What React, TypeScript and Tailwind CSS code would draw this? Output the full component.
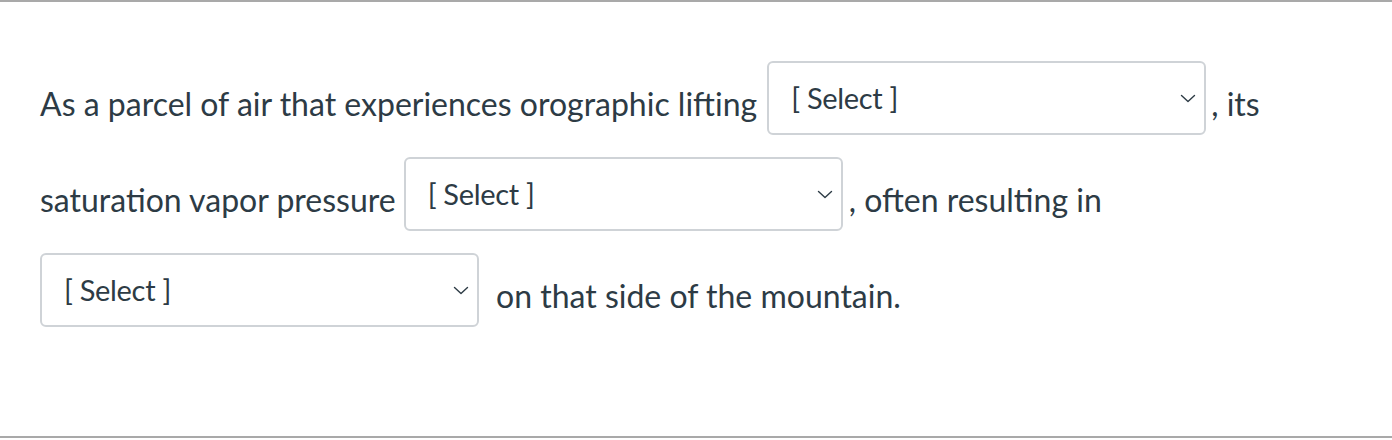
function Chevron() {
  return (
    <svg width="16" height="9" viewBox="0 0 16 9" fill="none" className="shrink-0">
      <path d="M1.5 1.5 8 7.5 14.5 1.5" stroke="#2d3b45" strokeWidth="1.4" strokeLinecap="round" strokeLinejoin="round" />
    </svg>
  );
}

function Select() {
  return (
    <div className="flex h-[74px] w-[439px] shrink-0 items-center justify-between rounded-[6px] border-2 border-[#cfd3d7] bg-white pl-[22px] pr-[8px]">
      <span className="-mt-[2px] text-[29px] tracking-[-0.3px] text-[#2d3b45]">[ Select ]</span>
      <Chevron />
    </div>
  );
}

export default function App() {
  return (
    <div className="flex h-[440px] w-[1392px] flex-col bg-white font-['Lato','Liberation_Sans',sans-serif] text-[#2d3b45]">
      <div className="h-[2px] bg-[#a9a9a9]" />
      <div className="flex flex-col gap-[22px] pl-[40px] pt-[59px] text-[32px] leading-none">
        <div className="flex items-center">
          <span className="pt-[12px]">As a parcel of air that experiences orographic lifting</span>
          <div className="ml-[10px] mr-[5px]">
            <Select />
          </div>
          <span className="pt-[12px]">, its</span>
        </div>
        <div className="flex items-center">
          <span className="pt-[12px]">saturation vapor pressure</span>
          <div className="ml-[8px] mr-[6px]">
            <Select />
          </div>
          <span className="pt-[12px]">, often resulting in</span>
        </div>
        <div className="flex items-center">
          <Select />
          <span className="ml-[17px] pt-[12px]">on that side of the mountain.</span>
        </div>
      </div>
      <div className="mt-auto mb-[2px] h-[2px] bg-[#a9a9a9]" />
    </div>
  );
}
